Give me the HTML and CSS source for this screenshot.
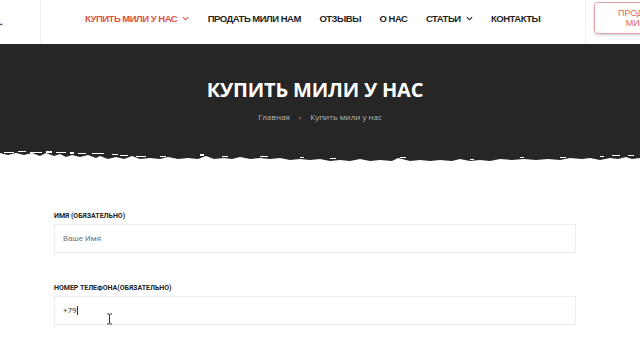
FILE: index.html
```html
<!DOCTYPE html>
<html lang="ru">
<head>
<meta charset="utf-8">
<link rel="stylesheet" href="styles.css">
</head>
<body>
<header class="header">
  <div class="logo"><span class="logo-mark">~</span></div>
  <nav class="nav">
    <a class="nav-item active">КУПИТЬ МИЛИ У НАС <svg class="chev" viewBox="0 0 8 5" width="7" height="5"><path d="M1 1l3 3 3-3" fill="none" stroke="currentColor" stroke-width="1.3"/></svg></a>
    <a class="nav-item">ПРОДАТЬ МИЛИ НАМ</a>
    <a class="nav-item">ОТЗЫВЫ</a>
    <a class="nav-item">О НАС</a>
    <a class="nav-item">СТАТЬИ <svg class="chev" viewBox="0 0 8 5" width="7" height="5"><path d="M1 1l3 3 3-3" fill="none" stroke="currentColor" stroke-width="1.3"/></svg></a>
    <a class="nav-item">КОНТАКТЫ</a>
  </nav>
  <div class="cta-wrap"><a class="cta">ПРОДАТЬ<br>МИЛИ</a></div>
</header>
<section class="hero">
  <h1 class="hero-title">КУПИТЬ МИЛИ У НАС</h1>
  <div class="crumbs"><span>Главная</span><span class="sep">›</span><span>Купить мили у нас</span></div>
</section>
<svg class="torn" viewBox="0 0 640 14" preserveAspectRatio="none" width="640" height="14">
  <path fill="#262626" d="M0 0H640V8L632 9 626 7 618 9 610 8 600 10 590 8 582 9 570 8 560 10 548 9 536 10 524 9 512 10 500 9 490 11 480 10 470 11 460 9 452 11 440 10 430 11 420 10 410 11 398 8 392 11 380 10 370 11 360 9 350 11 340 10 330 11 320 9 310 10 300 9 290 10 280 8 270 9 260 8 250 9 240 7 232 9 224 8 214 9 206 6 198 9 188 8 178 9 168 7 160 9 150 8 140 9 132 6 124 9 116 7 108 9 100 6 96 8 88 5 80 7 72 5 66 7 60 4 54 6 46 3 40 6 32 3 24 5 16 3 8 5 0 3Z"/>
  <path fill="#fff" d="M4 2h10v1H4zM18 1h8v1h-8zM30 2h12v1H30zM46 1h6v2h-6zM56 2h10v1H56zM70 2h4v2h-4zM78 3h8v1h-8zM92 3h12v1H92zM112 4h6v1h-6zM120 5h8v1h-8zM136 6h10v1h-10zM160 6h6v1h-6zM200 4h4v2h-4zM222 6h6v1h-6zM260 6h8v1h-8zM300 7h4v1h-4zM330 8h6v1h-6zM400 7h6v1h-6zM470 9h4v1h-4zM520 7h4v1h-4zM560 7h6v1h-6zM600 6h4v1h-4zM612 5h8v1h-8zM628 5h6v1h-6z"/>
</svg>
<main class="content">
  <form class="form">
    <div class="field">
      <label class="label">ИМЯ (ОБЯЗАТЕЛЬНО)</label>
      <div class="input placeholder">Ваше Имя</div>
    </div>
    <div class="field">
      <label class="label">НОМЕР ТЕЛЕФОНА(ОБЯЗАТЕЛЬНО)</label>
      <div class="input value">+79<span class="caret"></span>
        <svg class="ibeam" viewBox="0 0 7 12" width="7" height="12"><path d="M1 1h2l.5.5.5-.5h2M3.5 1.5v9M1 11h2l.5-.5.5.5h2" fill="none" stroke="#333" stroke-width="1"/></svg>
      </div>
    </div>
  </form>
</main>
</body>
</html>
```
FILE: styles.css
```css
* { box-sizing: border-box; margin: 0; padding: 0; }
html, body { width: 640px; height: 360px; overflow: hidden; background: #fff; }
body { font-family: "Liberation Sans", Arial, sans-serif; color: #222; }

.header {
  height: 44px;
  display: flex;
  align-items: stretch;
  background: #fff;
  overflow: hidden;
}
.logo {
  width: 41px;
  flex: none;
  border-right: 1px solid #f0f0f0;
  position: relative;
}
.logo-mark {
  position: absolute;
  left: -3px;
  top: 19px;
  font-size: 10px;
  font-weight: bold;
  color: #555;
}
.nav {
  display: flex;
  align-items: center;
  gap: 18.5px;
  padding-left: 44px;
  flex: 1;
}
.nav-item {
  font-size: 9.5px;
  font-weight: bold;
  color: #1f1f1f;
  letter-spacing: -0.5px;
  display: flex;
  align-items: center;
  gap: 5px;
  white-space: nowrap;
  margin-top: -8px;
}
.nav-item.active { color: #e0533f; }
.chev { display: block; }
.cta-wrap {
  width: 55px;
  flex: none;
  border-left: 1px solid #f0f0f0;
  padding: 2px 0 0 8px;
}
.cta {
  display: block;
  width: 90px;
  height: 32px;
  border: 1.5px solid #dba4a4;
  border-radius: 4px;
  box-shadow: 0 1px 3px rgba(0,0,0,0.2);
  color: #e46a5c;
  font-size: 9px;
  line-height: 10px;
  text-align: center;
  padding-top: 5px;
  white-space: nowrap;
}

.hero {
  height: 106px;
  background: #262626;
  display: flex;
  flex-direction: column;
  align-items: center;
  padding-top: 33px;
}
.hero-title {
  font-family: "Open Sans", sans-serif;
  font-weight: 700;
  font-size: 20px;
  line-height: 26px;
  color: #fff;
  letter-spacing: -0.2px;
  margin-left: -10px;
}
.crumbs {
  margin-top: 8px;
  font-family: "Open Sans", sans-serif;
  font-size: 8px;
  color: #b8b8b8;
  display: flex;
  gap: 9px;
}
.torn { display: block; }

.content { padding: 48px 64px 0 54px; }
.form { width: 522px; display: flex; flex-direction: column; gap: 31px; }
.field { display: flex; flex-direction: column; gap: 4px; }
.label {
  font-family: "Roboto", sans-serif;
  font-weight: 700;
  font-size: 7px;
  line-height: 8px;
  color: #222;
}
.input {
  height: 29px;
  border: 1px solid #ececec;
  font-family: "Roboto", sans-serif;
  font-size: 8px;
  padding: 0 8px;
  display: flex;
  align-items: center;
  position: relative;
}
.placeholder { color: #777; }
.value { color: #444; }
.caret { display: inline-block; width: 1px; height: 9px; background: #333; }
.ibeam { position: absolute; left: 51px; top: 16px; }
```
